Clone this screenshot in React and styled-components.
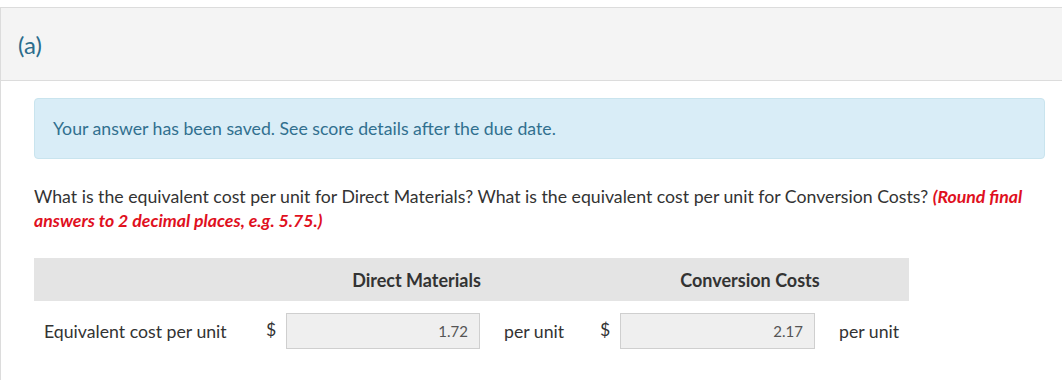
import React from 'react';
import styled, { createGlobalStyle } from 'styled-components';

const GlobalStyle = createGlobalStyle`
  html, body {
    margin: 0;
    padding: 0;
    background: #fff;
    overflow: hidden;
  }
  body {
    font-family: Lato, 'Open Sans', sans-serif;
    color: #333;
  }
`;

const Panel = styled.section`
  margin-top: 7px;
  height: 372px;
  border-top: 1px solid #dcdcdc;
  border-left: 1px solid #dcdcdc;
`;

const PanelHeader = styled.div`
  height: 72px;
  display: flex;
  align-items: center;
  padding-left: 17px;
  background: #f4f4f4;
  border-bottom: 1px solid #dcdcdc;
  color: #2b6c8c;
  font-size: 24px;
`;

const PanelBody = styled.div`
  padding: 17px 17px 0 33px;
`;

const Alert = styled.div`
  height: 59px;
  display: flex;
  align-items: center;
  padding-left: 18px;
  background: #d9edf7;
  border: 1px solid #c9e4ee;
  border-radius: 4px;
  color: #31708f;
  font-size: 17.7px;
`;

const Question = styled.p`
  margin: 26px 0 0;
  font-size: 17.7px;
  line-height: 24px;
  color: #333;
`;

const Hint = styled.em`
  color: #e0101e;
  font-weight: 700;
`;

const Grid = styled.div`
  margin-top: 25px;
  width: 875px;
  display: grid;
  grid-template-columns: 222px 335px 318px;
`;

const HeadCell = styled.div`
  height: 43px;
  display: flex;
  align-items: center;
  justify-content: center;
  background: #e4e4e4;
  font-weight: 700;
  font-size: 18px;
  padding-right: ${(p) => p.$pull || 0}px;
`;

const RowLabel = styled.div`
  padding: 12px 0 0 10px;
  height: 36px;
  display: flex;
  align-items: center;
  font-size: 17.7px;
`;

const AmountCell = styled.div`
  padding: 12px 0 0 ${(p) => p.$indent}px;
  display: flex;
  align-items: center;
  font-size: 17.7px;
`;

const Currency = styled.span`
  width: 20px;
  align-self: flex-start;
  margin-top: 6px;
`;

const AmountBox = styled.div`
  width: ${(p) => p.$width}px;
  height: 34px;
  box-sizing: content-box;
  border: 1px solid #cfcfcf;
  background: #efefef;
  display: flex;
  align-items: center;
  justify-content: flex-end;
  padding-right: 11px;
  font-size: 15px;
  color: #555;
`;

const Unit = styled.span`
  margin-left: 24px;
`;

const rows = [
  { label: 'Direct Materials', value: '1.72', indent: 10, width: 181, pull: 14 },
  { label: 'Conversion Costs', value: '2.17', indent: 9, width: 182, pull: 0 },
];

export default function App() {
  return (
    <>
      <GlobalStyle />
      <Panel>
        <PanelHeader>(a)</PanelHeader>
        <PanelBody>
          <Alert>Your answer has been saved. See score details after the due date.</Alert>
          <Question>
            What is the equivalent cost per unit for Direct Materials? What is the equivalent cost per
            unit for Conversion Costs? <Hint>(Round final answers to 2 decimal places, e.g. 5.75.)</Hint>
          </Question>
          <Grid>
            <HeadCell />
            {rows.map((r) => (
              <HeadCell key={r.label} $pull={r.pull}>{r.label}</HeadCell>
            ))}
            <RowLabel>Equivalent cost per unit</RowLabel>
            {rows.map((r) => (
              <AmountCell key={r.label} $indent={r.indent}>
                <Currency>$</Currency>
                <AmountBox $width={r.width}>{r.value}</AmountBox>
                <Unit>per unit</Unit>
              </AmountCell>
            ))}
          </Grid>
        </PanelBody>
      </Panel>
    </>
  );
}
